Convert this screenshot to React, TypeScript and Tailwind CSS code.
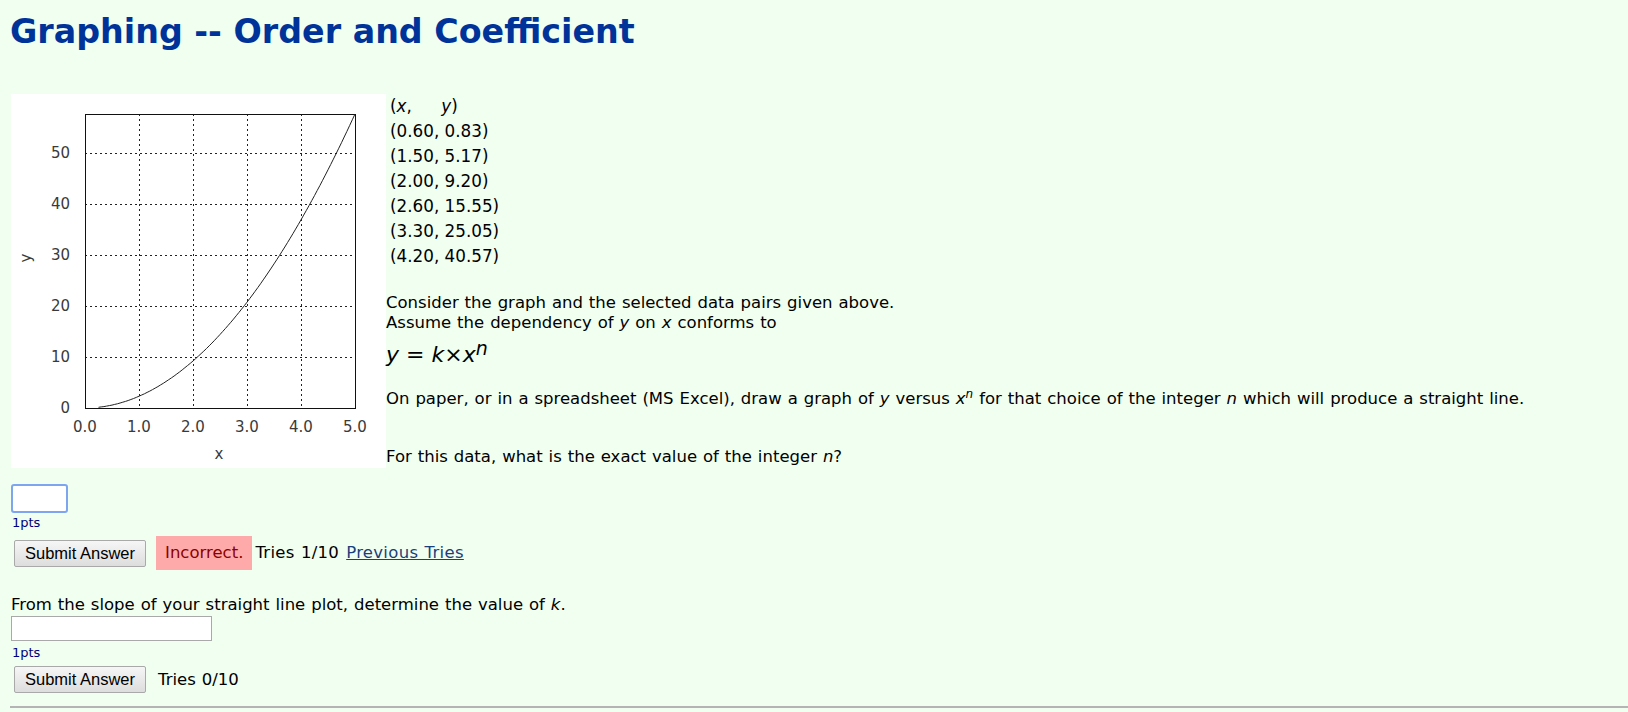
import React from 'react';

const FONT = { fontFamily: '"DejaVu Sans", Verdana, sans-serif' };

const xs = (v: number) => 74 + v * 54;
const ys = (v: number) => 314 - v * 5.1;

const curve = Array.from({ length: 96 }, (_, i) => 0.25 + i * 0.05)
  .map((x) => `${xs(x).toFixed(1)},${ys(2.306 * x * x).toFixed(1)}`)
  .join(' ');

const PowerPlot = () => (
  <div className="w-[375px] h-[374px] bg-white float-left">
    <svg width="375" height="374" viewBox="0 0 375 374">
      <g stroke="#222" strokeWidth="1" strokeDasharray="2 3">
        {[1, 2, 3, 4].map((v) => (
          <line key={`v${v}`} x1={xs(v) + 0.5} y1={20} x2={xs(v) + 0.5} y2={314} />
        ))}
        {[10, 20, 30, 40, 50].map((v) => (
          <line key={`h${v}`} x1={74} y1={ys(v) + 0.5} x2={344} y2={ys(v) + 0.5} />
        ))}
      </g>
      <rect x="74.5" y="20.5" width="270" height="294" fill="none" stroke="#111" strokeWidth="1" />
      <polyline points={curve} fill="none" stroke="#222" strokeWidth="1" />
      <g fill="#3a3a3a" fontSize="15" fontFamily='"DejaVu Sans", sans-serif'>
        {[0, 10, 20, 30, 40, 50].map((v) => (
          <text key={`yl${v}`} x={59} y={ys(v) + 5} textAnchor="end">
            {v}
          </text>
        ))}
        {[0, 1, 2, 3, 4, 5].map((v) => (
          <text key={`xl${v}`} x={xs(v)} y={338} textAnchor="middle">
            {v.toFixed(1)}
          </text>
        ))}
        <text x={208} y={365} textAnchor="middle">
          x
        </text>
        <text textAnchor="middle" transform="translate(20 164) rotate(-90)">
          y
        </text>
      </g>
    </svg>
  </div>
);

const pairs = ['(0.60, 0.83)', '(1.50, 5.17)', '(2.00, 9.20)', '(2.60, 15.55)', '(3.30, 25.05)', '(4.20, 40.57)'];

const SubmitButton = () => (
  <button
    className="h-[27px] px-[10px] border border-[#a9a9a9] rounded-[2px] bg-linear-to-b from-[#f6f6f6] to-[#dddddd] text-[16.5px] text-black leading-none [word-spacing:0]"
    style={{ fontFamily: '"Liberation Sans", Arial, sans-serif' }}
  >
    Submit Answer
  </button>
);

export default function App() {
  return (
    <div
      className="min-h-[712px] w-full bg-[#f0fff0] text-black text-[16.5px] leading-[20px] [word-spacing:0.7px]"
      style={FONT}
    >
      <div className="pl-[10px] pt-[13px] text-[33.3px] leading-[38px] font-bold text-[#003399] [word-spacing:0]">
        Graphing -- Order and Coefficient
      </div>

      <div className="pl-[11px] mt-[43px] flow-root">
        <PowerPlot />
        <div className="ml-[375px]">
          <div className="pl-[4px] leading-[25px] text-[16.8px] [word-spacing:0]">
            <div>
              (<i>x</i>,<span className="inline-block w-[24px]" /> <i>y</i>)
            </div>
            {pairs.map((p) => (
              <div key={p}>{p}</div>
            ))}
          </div>
          <div className="mt-[24px]">Consider the graph and the selected data pairs given above.</div>
          <div>
            Assume the dependency of <i>y</i> on <i>x</i> conforms to
          </div>
          <div className="mt-[7px] text-[22px] leading-[30px] [word-spacing:0]">
            <i>y</i> = <i>k</i>×<i>x</i>
            <span className="inline-block align-top text-[19px] leading-[19px] -mt-[1px]">
              <i>n</i>
            </span>
          </div>
          <div className="mt-[19px]">
            On paper, or in a spreadsheet (MS Excel), draw a graph of <i>y</i> versus <i>x</i>
            <sup className="text-[12px]">
              <i>n</i>
            </sup>{' '}
            for that choice of the integer <i>n</i> which will produce a straight line.
          </div>
          <div className="mt-[38px]">
            For this data, what is the exact value of the integer <i>n</i>?
          </div>
        </div>
      </div>

      <div className="pl-[11px] mt-[16px]">
        <input
          type="text"
          className="block w-[57px] h-[29px] bg-white border-2 border-[#7ea6f0] rounded-[3px] outline-none"
        />
        <div className="text-[13px] leading-[16px] text-[#000080] mt-[2px] pl-px">1pts</div>
        <div className="flex items-center mt-[5px] pl-[3px]">
          <SubmitButton />
          <span className="ml-[10px] h-[34px] px-[9px] flex items-center bg-[#ffaaaa] text-[#8b0000]">Incorrect.</span>
          <span className="ml-[3px] tracking-[0.3px]">Tries 1/10</span>
          <a href="#" className="ml-[7px] text-[#1b3f7a] underline tracking-[0.3px]">
            Previous Tries
          </a>
        </div>

        <div className="mt-[25px]">
          From the slope of your straight line plot, determine the value of <i>k</i>.
        </div>
        <input type="text" className="block w-[201px] h-[25px] bg-white border border-[#a9a9a9] mt-px" />
        <div className="text-[13px] leading-[16px] text-[#000080] mt-[4px] pl-px">1pts</div>
        <div className="flex items-center mt-[5px] pl-[3px]">
          <SubmitButton />
          <span className="ml-[12px]">Tries 0/10</span>
        </div>
      </div>
      <div className="ml-[10px] mt-[13px] h-[2px] bg-[#b4b4b4]" />
    </div>
  );
}
